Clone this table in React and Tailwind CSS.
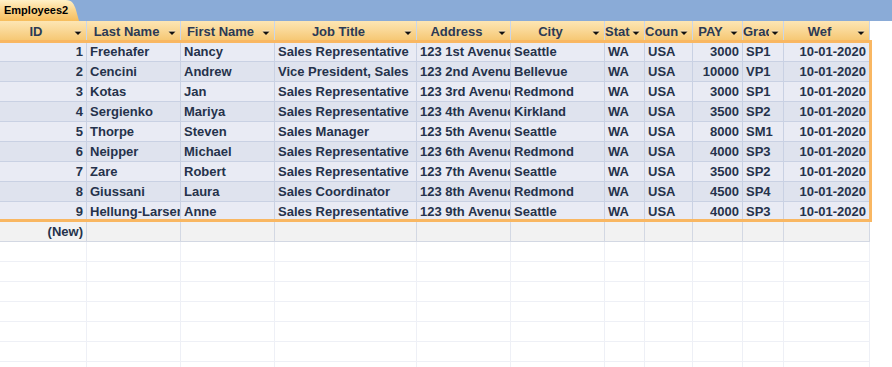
const cols = [
  { key: "id", title: "ID", w: 87, align: "right" },
  { key: "last", title: "Last Name", w: 94 },
  { key: "first", title: "First Name", w: 94 },
  { key: "job", title: "Job Title", w: 142 },
  { key: "addr", title: "Address", w: 94 },
  { key: "city", title: "City", w: 94 },
  { key: "state", title: "State/Province", w: 40 },
  { key: "country", title: "Country/Region", w: 48 },
  { key: "pay", title: "PAY", w: 50, align: "right" },
  { key: "grade", title: "Grade", w: 41 },
  { key: "wef", title: "Wef", w: 86, align: "right" },
];

const rows = [
  [1, "Freehafer", "Nancy", "Sales Representative", "123 1st Avenue", "Seattle", "WA", "USA", 3000, "SP1", "10-01-2020"],
  [2, "Cencini", "Andrew", "Vice President, Sales", "123 2nd Avenue", "Bellevue", "WA", "USA", 10000, "VP1", "10-01-2020"],
  [3, "Kotas", "Jan", "Sales Representative", "123 3rd Avenue", "Redmond", "WA", "USA", 3000, "SP1", "10-01-2020"],
  [4, "Sergienko", "Mariya", "Sales Representative", "123 4th Avenue", "Kirkland", "WA", "USA", 3500, "SP2", "10-01-2020"],
  [5, "Thorpe", "Steven", "Sales Manager", "123 5th Avenue", "Seattle", "WA", "USA", 8000, "SM1", "10-01-2020"],
  [6, "Neipper", "Michael", "Sales Representative", "123 6th Avenue", "Redmond", "WA", "USA", 4000, "SP3", "10-01-2020"],
  [7, "Zare", "Robert", "Sales Representative", "123 7th Avenue", "Seattle", "WA", "USA", 3500, "SP2", "10-01-2020"],
  [8, "Giussani", "Laura", "Sales Coordinator", "123 8th Avenue", "Redmond", "WA", "USA", 4500, "SP4", "10-01-2020"],
  [9, "Hellung-Larsen", "Anne", "Sales Representative", "123 9th Avenue", "Seattle", "WA", "USA", 4000, "SP3", "10-01-2020"],
];

const Arrow = () => (
  <svg width="8" height="6" viewBox="0 0 8 6" className="shrink-0 ml-[2px] mr-[4px] mt-[2px]">
    <path d="M0.5 1.5 H7.5 L4 5 Z" fill="#101010" />
    <path d="M0.5 1 H7.5" stroke="#ffffff" strokeOpacity="0.6" strokeWidth="0.8" />
  </svg>
);

export default function App() {
  return (
    <div className="w-[892px] h-[367px] overflow-hidden bg-white text-[13px] font-bold text-[#25324b] font-['Liberation_Sans',Arial,sans-serif]">
      {/* object tab strip */}
      <div className="h-[21px] bg-[#8aabd7] flex items-end">
        <div className="w-[79px] h-[21px] flex items-center pl-[4px] text-[11px] text-black bg-gradient-to-b from-[#fff1c8] via-[#fcd489] to-[#f6bd5c] [clip-path:path('M0,0_H66_C72,0_74,4_76,10_L79,21_H0Z')]">
          Employees2
        </div>
      </div>

      <div className="w-max">
        {/* header */}
        <div className="flex h-[21px]">
          {cols.map((c) => (
            <div
              key={c.key}
              style={{ width: c.w }}
              className="shrink-0 flex items-center border-r border-[#c9d6ea] bg-gradient-to-b from-[#fde6b4] to-[#f5c56d] text-[#2b3a55]"
            >
              <span className="flex-1 min-w-0 overflow-hidden whitespace-nowrap text-center">{c.title}</span>
              <Arrow />
            </div>
          ))}
        </div>

        {/* records */}
        <div className="relative">
          {rows.map((r, i) => (
            <div key={r[0]} className={`flex h-[20px] ${i % 2 ? "bg-[#dfe3ee]" : "bg-[#e9ebf4]"}`}>
              {cols.map((c, j) => (
                <div
                  key={c.key}
                  style={{ width: c.w }}
                  className={`shrink-0 flex items-center border-r border-b border-[#c9d1e3] overflow-hidden whitespace-nowrap ${
                    c.align === "right" ? "justify-end pr-[3px]" : "pl-[3px]"
                  }`}
                >
                  {r[j]}
                </div>
              ))}
            </div>
          ))}
          <div className="absolute left-[-3px] top-[-2px] w-[875px] h-[182px] border-[3px] border-[#f9b762] pointer-events-none" />
        </div>

        {/* new record row */}
        <div className="flex h-[20px] bg-[#f2f2f2]">
          {cols.map((c) => (
            <div
              key={c.key}
              style={{ width: c.w }}
              className={`shrink-0 flex items-center border-r border-b border-[#d3d8e3] ${c.align === "right" ? "justify-end pr-[3px]" : ""}`}
            >
              {c.key === "id" ? "(New)" : ""}
            </div>
          ))}
        </div>

        {/* empty sheet area */}
        {Array.from({ length: 7 }).map((_, i) => (
          <div key={i} className="flex h-[20px]">
            {cols.map((c) => (
              <div key={c.key} style={{ width: c.w }} className="shrink-0 border-r border-b border-[#eef0f6]" />
            ))}
          </div>
        ))}
      </div>
    </div>
  );
}
